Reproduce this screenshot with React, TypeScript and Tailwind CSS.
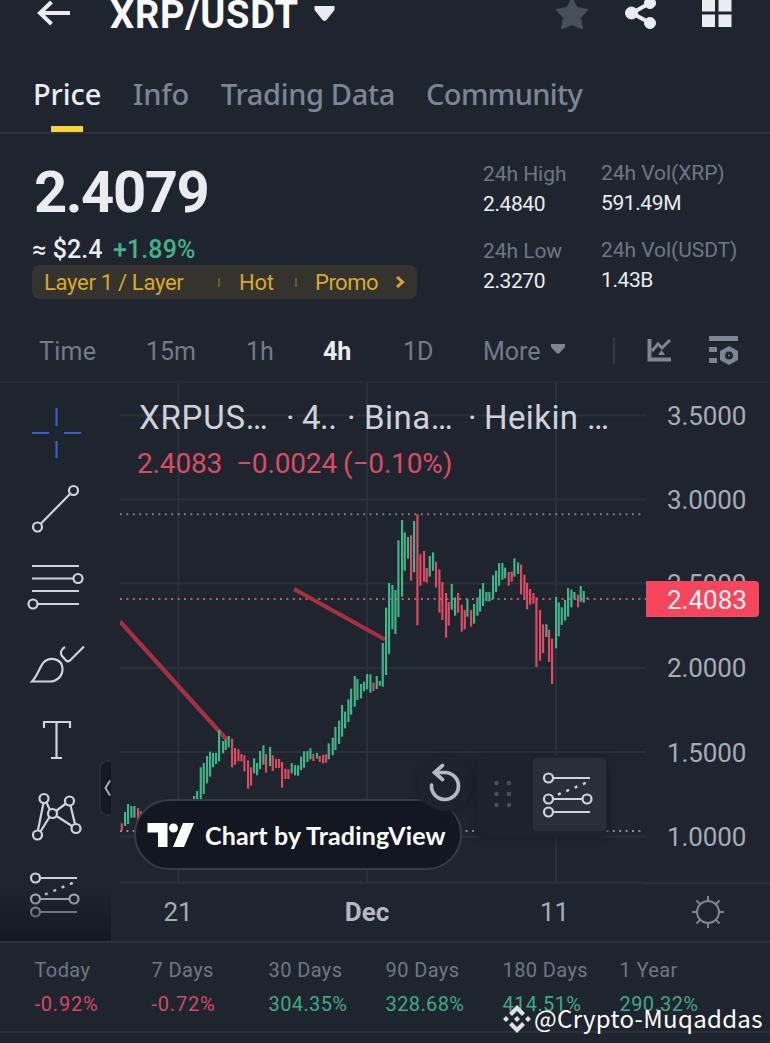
import React from "react";

type Tone = "g" | "r";
type Candle = [number, number, number, Tone];

const GREEN = "#3fb587";
const RED = "#dd4a61";

/* x, high, low, tone: drawn in thirds of a pixel */
const earlyCandles: Candle[] = [
  [35, 400, 422, "r"], [45, 366, 408, "g"], [54, 342, 402, "g"], [64, 348, 383, "g"], [73, 348, 383, "g"],
  [84, 354, 396, "r"], [92, 364, 396, "r"], [252, 318, 340, "g"], [261, 303, 340, "g"], [272, 232, 340, "g"],
  [281, 219, 312, "g"], [291, 198, 280, "g"], [300, 185, 260, "g"], [309, 189, 232, "g"], [318, 189, 222, "g"],
  [327, 120, 214, "g"], [339, 153, 190, "g"], [347, 148, 180, "g"], [356, 138, 172, "g"], [366, 146, 232, "r"],
  [375, 174, 224, "r"], [385, 178, 214, "r"], [394, 192, 214, "r"], [403, 196, 244, "r"], [414, 211, 296, "r"],
  [423, 232, 287, "r"], [432, 205, 250, "g"], [441, 219, 256, "g"], [450, 183, 237, "g"], [460, 166, 224, "g"],
  [468, 192, 248, "r"], [480, 171, 228, "g"], [488, 196, 243, "r"], [498, 206, 234, "r"], [507, 207, 234, "r"],
  [516, 216, 293, "r"], [526, 236, 267, "r"], [535, 238, 267, "r"], [545, 220, 250, "g"], [555, 225, 256, "g"],
  [564, 226, 257, "g"], [573, 200, 240, "g"], [582, 184, 233, "g"], [592, 183, 216, "g"], [601, 175, 208, "g"],
  [610, 192, 213, "r"], [621, 189, 206, "g"], [629, 198, 216, "r"], [639, 194, 220, "r"], [648, 193, 218, "r"],
  [656, 160, 208, "g"], [668, 143, 196, "g"], [676, 111, 180, "g"], [687, 92, 162, "g"], [696, 45, 140, "g"],
  [705, 65, 115, "g"], [715, 28, 96, "g"], [723, -4, 74, "g"], [734, -42, 50, "g"], [742, -33, 30, "g"],
  [753, -18, 25, "g"], [762, -25, 4, "g"], [771, -48, -2, "g"],
];

const lateCandles: Candle[] = [
  [1, 523, 578, "g"], [10, 548, 573, "r"], [20, 528, 567, "g"], [29, 543, 557, "g"], [38, 429, 560, "g"],
  [48, 323, 525, "g"], [57, 249, 462, "g"], [67, 255, 388, "g"], [76, 270, 402, "g"], [85, 121, 351, "g"],
  [96, 60, 290, "g"], [104, 97, 212, "g"], [114, 111, 176, "g"], [123, 106, 242, "r"], [132, 63, 217, "g"],
  [142, 43, 376, "r"], [151, 163, 257, "r"], [162, 153, 245, "r"], [170, 204, 248, "r"], [179, 168, 230, "g"],
  [189, 157, 212, "g"], [198, 185, 262, "r"], [208, 208, 338, "r"], [217, 246, 360, "r"], [228, 279, 413, "r"],
  [236, 306, 377, "r"], [245, 252, 329, "g"], [255, 292, 347, "g"], [264, 279, 338, "r"], [275, 314, 395, "r"],
  [284, 330, 388, "r"], [292, 297, 350, "g"], [303, 330, 380, "r"], [312, 312, 371, "g"], [322, 292, 347, "g"],
  [330, 267, 335, "g"], [339, 249, 318, "g"], [349, 276, 304, "g"], [358, 276, 304, "g"], [369, 226, 297, "g"],
  [378, 212, 276, "g"], [387, 189, 257, "g"], [397, 189, 239, "g"], [405, 203, 235, "g"], [416, 216, 257, "r"],
  [425, 215, 245, "r"], [433, 175, 230, "g"], [444, 187, 222, "g"], [453, 194, 283, "r"], [463, 224, 298, "r"],
  [471, 248, 328, "r"], [480, 267, 314, "r"], [490, 279, 311, "r"], [499, 292, 501, "r"], [510, 330, 482, "r"],
  [519, 373, 459, "r"], [529, 373, 411, "g"], [537, 389, 486, "r"], [546, 416, 552, "r"], [558, 291, 445, "g"],
  [566, 307, 409, "g"], [575, 322, 375, "g"], [585, 300, 362, "g"], [594, 264, 350, "g"], [604, 269, 322, "g"],
  [613, 276, 298, "g"], [624, 284, 322, "r"], [632, 258, 305, "g"], [641, 273, 308, "g"], [651, 292, 297, "r"],
];

function Candles({ data }: { data: Candle[] }) {
  return (
    <>
      {data.map(([x, top, bottom, tone]) => (
        <rect key={x} x={x - 3} y={top} width={6.5} height={bottom - top} fill={tone === "g" ? GREEN : RED} />
      ))}
    </>
  );
}

function Header() {
  return (
    <header className="flex h-[58px] items-start">
      <svg className="ml-[36px] h-[30px] w-[36px]" viewBox="0 0 36 30" fill="none" stroke="#eaecef" strokeWidth="4">
        <path d="M34 13H4M15.500 2L4 13L15.500 24" />
      </svg>
      <h1 className="-mt-[7px] ml-[38px] w-[204px] font-['Roboto'] text-[38px] leading-[44px] font-bold tracking-[0.8px] whitespace-nowrap text-[#fafafc]">
        XRP/USDT
      </h1>
      <svg className="h-[24px] w-[22px]" viewBox="0 0 22 24">
        <path d="M0.500 6H20.500V10L12.500 20Q10.500 22 8.500 20L0.500 10Z" fill="#eaecef" />
      </svg>
      <svg className="ml-[219px] h-[32px] w-[36px]" viewBox="0 0 36 32">
        <path d="M17 -2L22 7.500L33 9.500L25.500 17.500L27.500 29L17 24.500L6.500 29L8.500 17.500L1 9.500L12 7.500Z" fill="#474f5c" stroke="#474f5c" strokeLinejoin="round" />
      </svg>
      <svg className="ml-[33px] h-[32px] w-[34px]" viewBox="0 0 34 32" fill="#eaecef" stroke="#eaecef">
        <path d="M26 3L8 13L26 23" fill="none" strokeWidth="4" />
        <circle cx="7.500" cy="13" r="6" />
        <circle cx="26" cy="3" r="5.500" />
        <circle cx="26" cy="23" r="5.500" />
      </svg>
      <svg className="ml-[43px] h-[32px] w-[32px]" viewBox="0 0 32 32" fill="#eaecef">
        <path d="M1 -2H14V11.500H1ZM17.500 -2H30.500V11.500H17.500ZM1 14.500H14V27H1ZM17.500 14.500H30.500V27H17.500Z" />
      </svg>
    </header>
  );
}

function Tabs() {
  return (
    <nav className="flex h-[76px] border-b-2 border-[#2c333e] pl-[33px] font-['Noto_Sans'] text-[29px] leading-[72px] font-medium whitespace-nowrap text-[#7d8594]">
      <div className="flex w-[100px] flex-col">
        <span className="h-[68px] tracking-[-0.1px] text-[#eaecef]">Price</span>
        <span className="ml-[18px] h-[7px] w-[32px] bg-[#f8d33a]" />
      </div>
      <span className="w-[88px] tracking-[-0.1px]">Info</span>
      <span className="w-[205px] tracking-[-0.35px]">Trading Data</span>
      <span className="tracking-[-0.6px]">Community</span>
    </nav>
  );
}

function Stat({ label, value }: { label: string; value: string }) {
  return (
    <div className="h-[77px]">
      <div className="h-[30px] text-[21px] leading-[30px] tracking-[-0.05px] text-[#6f7683]">{label}</div>
      <div className="h-[30px] text-[21px] leading-[30px] tracking-[-0.4px] text-[#eaecef]">{value}</div>
    </div>
  );
}

function Summary() {
  return (
    <section className="flex h-[169px] pl-[32px] whitespace-nowrap">
      <div className="w-[451px]">
        <div className="ml-[2px] h-[96px] pt-[22px] text-[58px] leading-[72px] font-bold tracking-[-1.5px] text-[#eaecef]">2.4079</div>
        <div className="flex h-[35px] text-[25px] leading-[40px] font-medium">
          <span className="w-[81px] tracking-[0.1px] text-[#eaecef]">≈ $2.4</span>
          <span className="tracking-[0.1px] text-[#3fb587]">+1.89%</span>
        </div>
        <div className="flex h-[34px] w-[385px] items-center rounded-[8px] bg-[#34332d] pl-[12px] text-[22px] leading-[34px] text-[#d9a928]">
          <span className="w-[174px] pt-[2px] tracking-[-0.3px]">Layer 1 / Layer</span>
          <span className="h-[9px] w-[2px] bg-[#6b5a2a]" />
          <span className="ml-[19px] w-[56px] pt-[2px] tracking-[-0.2px]">Hot</span>
          <span className="h-[9px] w-[2px] bg-[#6b5a2a]" />
          <span className="ml-[18px] w-[79px] pt-[2px] tracking-[-0.5px]">Promo</span>
          <svg className="h-[14px] w-[12px]" viewBox="0 0 12 14" fill="none" stroke="#d9a928" strokeWidth="3">
            <path d="M3 2L8.500 7L3 12" />
          </svg>
        </div>
      </div>
      <div className="w-[118px] pt-[25px]">
        <Stat label="24h High" value="2.4840" />
        <Stat label="24h Low" value="2.3270" />
      </div>
      <div className="pt-[24px]">
        <Stat label="24h Vol(XRP)" value="591.49M" />
        <Stat label="24h Vol(USDT)" value="1.43B" />
      </div>
    </section>
  );
}

function Intervals() {
  return (
    <div className="flex h-[80px] items-center border-b-2 border-[#262c36] pt-[19px] pl-[39px] text-[25px] leading-[30px] whitespace-nowrap text-[#737a88]">
      <span className="w-[107px] pt-[1px] tracking-[0.3px]">Time</span>
      <span className="w-[100px] pt-[1px]">15m</span>
      <span className="w-[77px] pt-[1px]">1h</span>
      <span className="w-[80px] pt-[1px] font-bold text-[#eaecef]">4h</span>
      <span className="w-[80px] pt-[1px]">1D</span>
      <span className="w-[67px] pt-[1px]">More</span>
      <svg className="-mt-[5px] h-[12px] w-[16px]" viewBox="0 0 16 12">
        <path d="M1 1H15V4L9.500 10Q8 11 6.500 10L1 4Z" fill="#7d8594" />
      </svg>
      <span className="-mt-[2px] ml-[47px] h-[26px] w-[2px] bg-[#343b46]" />
      <svg className="-mt-[4px] ml-[32px] h-[26px] w-[26px]" viewBox="0 0 26 26" fill="none" stroke="#7d8594">
        <path d="M2.500 2V22.500H24" strokeWidth="4" />
        <path d="M5 14L11 7L15 11L23 3" strokeWidth="3" />
        <path d="M14.500 13L18 18H11Z" fill="#7d8594" stroke="none" />
      </svg>
      <svg className="-mt-[1px] ml-[35px] h-[32px] w-[32px]" viewBox="0 0 32 32" fill="#7d8594">
        <path d="M1 1H30V6H1ZM1 12H9V17H1ZM1 23H9V28H1Z" />
        <path fillRule="evenodd" d="M21 11L30 16V25L21 30L12 25V16ZM21 16.500A4 4 0 1 0 21 24.500A4 4 0 1 0 21 16.500Z" />
        <circle cx="21" cy="20.500" r="1" />
      </svg>
    </div>
  );
}

function FibIcon() {
  return (
    <>
      <path d="M40.500 21H77M40.500 42H69M40.500 55H77" />
      <circle cx="35.500" cy="21" r="4.500" />
      <circle cx="35.500" cy="42" r="4.500" />
      <circle cx="74" cy="42" r="4.500" />
      <circle cx="35.500" cy="55" r="4.500" />
      <path d="M45 37.500L75 25" strokeWidth="2.500" strokeDasharray="3 6" />
    </>
  );
}

function Tool({ children, stroke = "#cfd3dc" }: { children: React.ReactNode; stroke?: string }) {
  return (
    <svg className="h-[77px] w-[111px] shrink-0" viewBox="0 0 111 77" fill="none" stroke={stroke} strokeWidth="2.200">
      {children}
    </svg>
  );
}

function Toolbox() {
  return (
    <aside className="relative flex h-[558px] w-[120px] shrink-0 flex-col pt-[12px]">
      <Tool stroke="#3c5fc4">
        <path d="M56.500 13V31M56.500 46V63M32 38H49M64 38H81" />
      </Tool>
      <Tool>
        <path d="M41 51.500L70 22" />
        <circle cx="37.500" cy="55" r="4.500" />
        <circle cx="73.500" cy="18.500" r="4.500" />
      </Tool>
      <Tool>
        <path d="M32 17H79M32 29.500H73.500M32 42H79M38 55H79" />
        <circle cx="78" cy="29.500" r="4.500" />
        <circle cx="33" cy="55" r="4.500" />
      </Tool>
      <Tool>
        <path d="M32 55.500C38 49 40 40 44 36C50 30 62 33 62.500 42C63 51 56 55.500 50 55.500Z" />
        <path d="M65 21C60.500 23.500 60 27.500 62 30L66 34.500Q68 36 70 34.500L84 20.500" />
      </Tool>
      <Tool>
        <path d="M44 25V19H70V25M56.500 19V55M51 55H62" />
      </Tool>
      <Tool>
        <path d="M38 50L43.500 23M46.500 22.500L50 30M56 31L66 23.500M70.500 25.500L75 44M56.500 36L72 46M49.500 37L40.500 51.500" />
        <circle cx="44" cy="18.500" r="4.500" />
        <circle cx="69.500" cy="21" r="4.500" />
        <circle cx="52.500" cy="33.500" r="4.500" />
        <circle cx="37.500" cy="55" r="4.500" />
        <circle cx="76" cy="48.500" r="4.500" />
      </Tool>
      <Tool>
        <FibIcon />
      </Tool>
      <div className="absolute bottom-0 left-0 h-[58px] w-[111px] bg-gradient-to-b from-[#141823]/0 to-[#141823]" />
      <div className="absolute top-[377px] left-[99px] flex h-[56px] w-[12px] items-center justify-end rounded-l-[8px] border-y-2 border-l-2 border-[#262b36] bg-[#141823]">
        <svg className="h-[18px] w-[7px]" viewBox="0 0 7 18" fill="none" stroke="#a9adb8" strokeWidth="2">
          <path d="M6 1.500L1.500 9L6 16.500" />
        </svg>
      </div>
    </aside>
  );
}

function Legend() {
  return (
    <div className="absolute top-0 left-0 pt-[15px] whitespace-nowrap">
      <div className="flex pl-[19px] text-[33px] leading-[40px] text-[#cfd2da]">
        <span className="w-[147px] tracking-[0.8px]">XRPUS…</span>
        <span className="w-[16px]">·</span>
        <span className="w-[45px] tracking-[-0.5px]">4..</span>
        <span className="w-[17px]">·</span>
        <span className="w-[104px] tracking-[0.5px]">Bina…</span>
        <span className="w-[16px]">·</span>
        <span className="tracking-[0.4px]">Heikin …</span>
      </div>
      <div className="mt-[6px] flex pl-[17px] text-[28px] leading-[40px] tracking-[-0.15px] text-[#dc4c5f]">
        <span className="w-[99px]">2.4083</span>
        <span className="w-[107px]">−0.0024</span>
        <span>(−0.10%)</span>
      </div>
    </div>
  );
}

function FloatingControls() {
  return (
    <>
      <div className="absolute top-[416px] left-[14px] flex h-[71px] w-[328px] items-center rounded-full border-2 border-[#363b47] bg-[#131722] pl-[11px]">
        <svg className="h-[24px] w-[47px]" viewBox="0 0 47 24" fill="#fff">
          <path d="M0.500 0H20.500V24H11V9.500H0.500ZM36 0H47L37 24H26Z" />
          <circle cx="26.500" cy="5" r="4.500" />
        </svg>
        <span className="ml-[11px] font-['Lato'] text-[25px] leading-[30px] font-bold tracking-[0.15px] whitespace-nowrap text-white">
          Chart by TradingView
        </span>
      </div>
      <div className="absolute top-[372px] left-[297px] flex h-[56px] w-[56px] items-center justify-center rounded-full bg-[#1e222d] shadow-[0_2px_6px_#161a22]">
        <svg className="-mt-[3px] h-[40px] w-[34px]" viewBox="0 0 34 40" fill="none" stroke="#b5b8c3" strokeWidth="3.700" strokeLinecap="round">
          <path d="M3.500 23A13.500 13.500 0 1 0 17 10.500H7" />
          <path d="M14.500 3.500L6.500 10.500L14.500 17.500" />
        </svg>
      </div>
      <div className="absolute top-[373px] left-[357px] flex h-[80px] w-[130px] rounded-[8px] bg-[#1e222d] pt-[2px] pl-[16px] shadow-[0_2px_8px_#151921]">
        <svg className="h-[74px] w-[40px]" viewBox="0 0 40 74" fill="#4a4e59">
          {[25, 36, 47].map((y) => (
            <g key={y}>
              <circle cx="3.500" cy={y} r="2.300" />
              <circle cx="16" cy={y} r="2.300" />
            </g>
          ))}
        </svg>
        <div className="h-[73px] w-[73px] rounded-[4px] bg-[#2a2e39]">
          <svg className="h-[73px] w-[73px]" viewBox="20 1 73 73" fill="none" stroke="#d1d4dc" strokeWidth="2.200">
            <FibIcon />
          </svg>
        </div>
      </div>
    </>
  );
}

function Plot() {
  return (
    <div className="relative h-[558px] w-[526px] shrink-0">
      <svg className="block h-[558px] w-[526px]" viewBox="0 0 526 558">
        <g stroke="#2a303b" strokeWidth="2">
          <path d="M0 32.500H526M0 116.500H526M0 200.500H526M0 285H526M0 369H526M0 453.500H526" />
          <path d="M58.500 0V499M247 0V499M436 0V499M0 499.500H526" />
        </g>
        <g strokeWidth="2" strokeDasharray="2 4.400">
          <path d="M0 131.300H524" stroke="#767b86" />
          <path d="M0 448H524" stroke="#8b8f99" />
          <path d="M0 216H526" stroke="#cf566c" />
        </g>
        <g stroke="#a6303f" strokeWidth="4.200">
          <path d="M0 238.500L107 357M174 206L265 256.500" />
        </g>
        <g transform="scale(0.33333)">
          <g transform="translate(-30 921)">
            <Candles data={earlyCandles} />
          </g>
          <g transform="translate(750 351)">
            <Candles data={lateCandles} />
          </g>
        </g>
      </svg>
      <Legend />
      <div className="absolute top-[500px] left-0 flex h-[58px] text-[26px] leading-[58px] text-[#a6abb6]">
        <span className="w-[116px] text-center">21</span>
        <span className="w-[262px] text-center font-bold text-[#b4b8c2]">Dec</span>
        <span className="w-[113px] text-center">11</span>
      </div>
      <FloatingControls />
    </div>
  );
}

function PriceAxis() {
  return (
    <div className="relative flex h-[558px] w-[124px] flex-col text-[26px] text-[#a6abb6]">
      <div className="flex h-[498.500px] flex-col pl-[21px] tracking-[-0.1px]">
        <span className="mt-[-9px] h-[84px] leading-[84px]">3.5000</span>
        <span className="h-[84px] leading-[84px]">3.0000</span>
        <span className="h-[84px] leading-[84px]">2.5000</span>
        <span className="h-[85px] leading-[85px]">2.0000</span>
        <span className="h-[84px] leading-[84px]">1.5000</span>
        <span className="h-[84px] leading-[84px]">1.0000</span>
      </div>
      <div className="flex h-[59px] items-start border-t-2 border-[#2a303b] pt-[11px] pl-[45px]">
        <svg className="h-[34px] w-[34px]" viewBox="0 0 34 34" fill="none" stroke="#7f848f" strokeWidth="2">
          <circle cx="17" cy="17" r="11" />
          <path d="M17 1V6M17 28V33M1 17H6M28 17H33M5.500 5.500L9 9M25 25L28.500 28.500M28.500 5.500L25 9M9 25L5.500 28.500" />
        </svg>
      </div>
      <div className="absolute top-[198px] left-0 h-[36px] w-[113px] rounded-r-[4px] bg-[#f6465d] pl-[21px] leading-[38px] text-[#fbeef0]">
        2.4083
      </div>
    </div>
  );
}

const periods = [
  { label: "Today", value: "-0.92%", up: false },
  { label: "7 Days", value: "-0.72%", up: false },
  { label: "30 Days", value: "304.35%", up: true },
  { label: "90 Days", value: "328.68%", up: true },
  { label: "180 Days", value: "414.51%", up: true },
  { label: "1 Year", value: "290.32%", up: true },
];

function Periods() {
  return (
    <div className="flex h-[92px] border-y-2 border-[#2b313c] pt-[10px] pl-[34.500px] text-[20px] leading-[34px] whitespace-nowrap">
      {periods.map((p) => (
        <div key={p.label} className="w-[117px]">
          <div className="tracking-[0.4px] text-[#6f7683]">{p.label}</div>
          {p.up ? (
            <div className="tracking-[0.4px] text-[#3fa981]">{p.value}</div>
          ) : (
            <div className="tracking-[0.8px] text-[#d3495e]">{p.value}</div>
          )}
        </div>
      ))}
    </div>
  );
}

export default function App() {
  return (
    <main className="relative h-[1043px] w-[770px] overflow-hidden bg-[#1f252f] font-['Roboto',sans-serif]">
      <Header />
      <Tabs />
      <Summary />
      <Intervals />
      <section className="flex h-[558px]">
        <Toolbox />
        <Plot />
        <PriceAxis />
      </section>
      <Periods />
      <div className="absolute top-[1000px] left-[502px] flex items-center">
        <svg className="mt-[2px] h-[30px] w-[30px]" viewBox="0 0 30 30" fill="#dfe1e4">
          <path d="M15 1L23 9L20 12L15 7L10 12L7 9ZM15 29L23 21L20 18L15 23L10 18L7 21ZM4 12L7 15L4 18L1 15ZM26 12L29 15L26 18L23 15ZM15 12L18 15L15 18L12 15Z" />
        </svg>
        <span className="ml-[2px] font-['Noto_Sans_CJK_SC',sans-serif] text-[24px] leading-[36px] tracking-[0.32px] whitespace-nowrap text-white">
          @Crypto-Muqaddas
        </span>
      </div>
    </main>
  );
}
